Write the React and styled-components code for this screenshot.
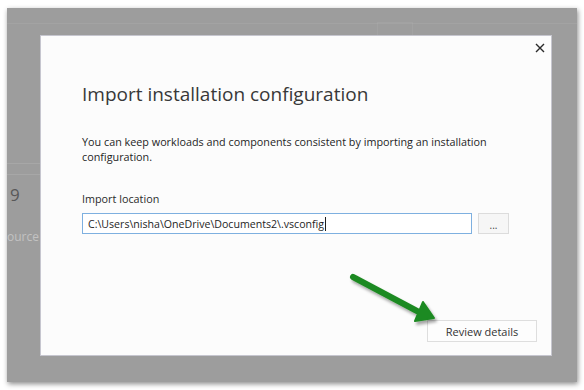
import styled, { createGlobalStyle } from 'styled-components';

const GlobalStyle = createGlobalStyle`
  html, body {
    margin: 0;
    padding: 0;
    background: #ffffff;
  }
  body {
    font-family: 'Open Sans', 'Noto Sans', 'Liberation Sans', sans-serif;
  }
`;

const Page = styled.div`
  width: 584px;
  height: 390px;
  box-sizing: border-box;
  padding: 8px 7px;
`;

const Frame = styled.div`
  position: relative;
  width: 570px;
  height: 374px;
  background: #9d9d9d;
  overflow: hidden;
  box-shadow: 1px 2px 5px rgba(0, 0, 0, 0.45);
`;

const BgHeader = styled.div`
  height: 15px;
  border-bottom: 1px solid rgba(255, 255, 255, 0.07);
  display: flex;
  justify-content: flex-end;
  padding-right: 164px;
`;

const BgTab = styled.div`
  align-self: flex-end;
  width: 34px;
  height: 12px;
  margin-bottom: -13px;
  border: 1px solid rgba(255, 255, 255, 0.05);
`;

const BgCard = styled.div`
  margin-top: 139px;
  width: 33px;
`;

const BgRule = styled.div`
  height: 1px;
  background: rgba(255, 255, 255, 0.1);
  margin-bottom: ${(p) => p.$gap}px;
`;

const BgNumber = styled.div`
  font-size: 17px;
  line-height: 20px;
  color: #585858;
  padding-left: 3px;
  margin-top: 10px;
`;

const BgCaption = styled.div`
  font-size: 12px;
  line-height: 16px;
  color: #c2c2c2;
  margin-top: 24px;
`;

const Dialog = styled.div`
  position: absolute;
  left: 33px;
  top: 27px;
  width: 512px;
  height: 321px;
  box-sizing: border-box;
  background: #fcfcfc;
  border: 1px solid #c6c6cf;
  display: flex;
  flex-direction: column;
`;

const CloseRow = styled.div`
  display: flex;
  justify-content: flex-end;
`;

const CloseButton = styled.button`
  width: 22px;
  height: 24px;
  padding: 0;
  border: none;
  background: transparent;
  display: flex;
  align-items: center;
  justify-content: center;
`;

const Body = styled.div`
  padding: 0 0 0 41px;
  display: flex;
  flex-direction: column;
`;

const Title = styled.h1`
  margin: 20px 0 0;
  font-size: 19px;
  line-height: 28px;
  font-weight: 400;
  color: #383838;
`;

const Description = styled.p`
  margin: 26px 0 0;
  width: 420px;
  font-size: 10.8px;
  line-height: 15px;
  color: #1e1e1e;
`;

const FieldLabel = styled.div`
  margin-top: 27px;
  font-size: 10.8px;
  line-height: 15px;
  color: #2a2a2a;
`;

const FieldRow = styled.div`
  margin-top: 7px;
  display: flex;
  gap: 6px;
`;

const PathInput = styled.div`
  width: 390px;
  height: 21px;
  box-sizing: border-box;
  border: 1px solid #7eb0e0;
  background: #ffffff;
  padding: 0 5px;
  display: flex;
  align-items: center;
  font-size: 10.6px;
  color: #1e1e1e;
`;

const Caret = styled.span`
  display: inline-block;
  width: 1px;
  height: 14px;
  background: #1e1e1e;
  margin-left: 1px;
`;

const BrowseButton = styled.button`
  width: 31px;
  height: 21px;
  box-sizing: border-box;
  border: 1px solid #dcdcdc;
  background: #f6f6f6;
  font-family: inherit;
  font-size: 10px;
  color: #444444;
  padding: 3px 0 0;
`;

const Footer = styled.div`
  margin-top: auto;
  padding: 0 14px 13px 0;
  display: flex;
  justify-content: flex-end;
`;

const ActionButton = styled.button`
  width: 110px;
  height: 22px;
  box-sizing: border-box;
  border: 1px solid #dedede;
  background: #fdfdfd;
  font-family: inherit;
  font-size: 11px;
  color: #333333;
  padding: 0;
`;

const Arrow = styled.svg`
  position: absolute;
  left: 336px;
  top: 258px;
  overflow: visible;
`;

export default function App() {
  return (
    <Page>
      <GlobalStyle />
      <Frame>
        <BgHeader>
          <BgTab />
        </BgHeader>
        <BgCard>
          <BgRule $gap={10} />
          <BgRule $gap={0} />
          <BgNumber>9</BgNumber>
          <BgCaption>ource</BgCaption>
        </BgCard>

        <Dialog>
          <CloseRow>
            <CloseButton aria-label="close">
              <svg width="10" height="10" viewBox="0 0 10 10">
                <path d="M1 1 L9 9 M9 1 L1 9" stroke="#2b2b2b" strokeWidth="1.4" />
              </svg>
            </CloseButton>
          </CloseRow>
          <Body>
            <Title>Import installation configuration</Title>
            <Description>
              You can keep workloads and components consistent by importing an installation
              configuration.
            </Description>
            <FieldLabel>Import location</FieldLabel>
            <FieldRow>
              <PathInput>
                C:\Users\nisha\OneDrive\Documents2\.vsconfig
                <Caret />
              </PathInput>
              <BrowseButton>...</BrowseButton>
            </FieldRow>
          </Body>
          <Footer>
            <ActionButton>Review details</ActionButton>
          </Footer>
        </Dialog>

        <Arrow width="100" height="70" viewBox="0 0 100 70">
          <defs>
            <filter id="arrowShadow" x="-20%" y="-20%" width="150%" height="150%">
              <feDropShadow dx="2" dy="3" stdDeviation="1.6" floodColor="#000" floodOpacity="0.35" />
            </filter>
          </defs>
          <g filter="url(#arrowShadow)">
            <line x1="10" y1="11" x2="74" y2="45" stroke="#1f8a22" strokeWidth="6" strokeLinecap="round" />
            <path d="M80 36 L91 52 L72 55 Z" fill="#1f8a22" stroke="#1f8a22" strokeWidth="2" strokeLinejoin="round" />
          </g>
        </Arrow>
      </Frame>
    </Page>
  );
}
